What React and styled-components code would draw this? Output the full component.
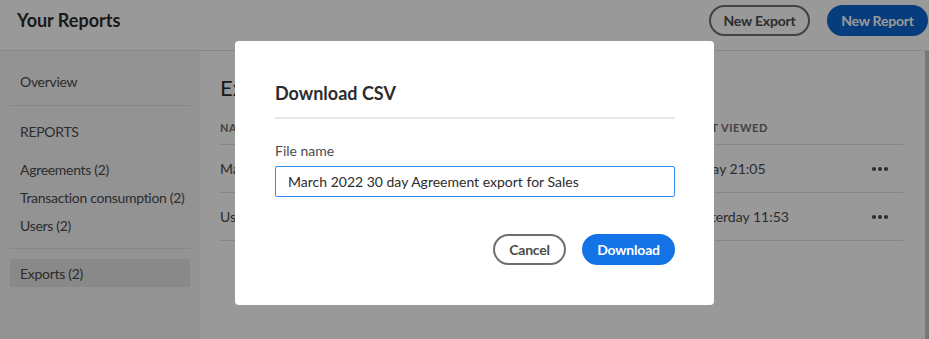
import React from 'react';
import styled, { createGlobalStyle } from 'styled-components';

const GlobalStyle = createGlobalStyle`
  html, body {
    margin: 0;
    padding: 0;
    width: 929px;
    height: 339px;
    overflow: hidden;
    font-family: Lato, "Open Sans", sans-serif;
    color: #2c2c2c;
    background: #fff;
  }
  * { box-sizing: border-box; }
`;

const Page = styled.div`
  position: relative;
  width: 929px;
  height: 339px;
  display: flex;
  flex-direction: column;
`;

const Header = styled.header`
  height: 51px;
  flex: none;
  display: flex;
  justify-content: space-between;
  align-items: flex-start;
  padding: 5px 0 0 17px;
  border-bottom: 1px solid #e1e1e1;
`;

const PageTitle = styled.h1`
  margin: 0;
  font-size: 18px;
  font-weight: 700;
  line-height: 31px;
  color: #2c2c2c;
`;

const HeaderActions = styled.div`
  display: flex;
  gap: 17px;
  margin-right: 1px;
`;

const PillButton = styled.button`
  height: 31px;
  width: ${(p) => p.$w}px;
  padding: 0;
  border-radius: 16px;
  font-family: Lato, sans-serif;
  font-size: 14px;
  font-weight: 700;
  letter-spacing: -0.2px;
  cursor: pointer;
  border: 2px solid ${(p) => (p.$primary ? p.$primary : '#6e6e6e')};
  background: ${(p) => (p.$primary ? p.$primary : '#fff')};
  color: ${(p) => (p.$primary ? '#fff' : '#4b4b4b')};
`;

const Body = styled.div`
  flex: 1;
  display: flex;
  min-height: 0;
`;

const Sidebar = styled.nav`
  width: 200px;
  flex: none;
  background: #f5f5f5;
  padding: 16px 10px 0;
`;

const NavItem = styled.div`
  height: 28px;
  display: flex;
  align-items: center;
  padding: 0 10px;
  font-size: 14px;
  letter-spacing: -0.3px;
  white-space: nowrap;
  color: #4b4b4b;
  background: ${(p) => (p.$active ? '#e4e4e4' : 'transparent')};
`;

const NavHeading = styled(NavItem)`
  margin: 11px 0 10px;
  text-transform: uppercase;
`;

const NavDivider = styled.hr`
  margin: ${(p) => p.$top}px 0 10px;
  border: none;
  border-top: 1px solid #e1e1e1;
`;

const Main = styled.main`
  flex: 1;
  padding: 22px 22px 0 20px;
  border-right: 4px solid #c6c6c6;
`;

const SectionTitle = styled.h2`
  margin: 0 0 12px;
  font-size: 22px;
  font-weight: 400;
  line-height: 30px;
  color: #2c2c2c;
`;

const Table = styled.div`
  display: flex;
  flex-direction: column;
`;

const Row = styled.div`
  height: ${(p) => (p.$head ? 30 : 48)}px;
  padding-bottom: ${(p) => (p.$head ? 4 : 0)}px;
  display: grid;
  grid-template-columns: 250px 220px 1fr 50px;
  align-items: center;
  border-bottom: 1px solid #e1e1e1;
  font-size: 14px;
  color: #4b4b4b;
`;

const HeadCell = styled.div`
  font-size: 11px;
  font-weight: 700;
  letter-spacing: 0.6px;
  color: #6e6e6e;
  text-transform: uppercase;
`;

const Cell = styled.div`
  white-space: nowrap;
  overflow: hidden;
`;

const MoreButton = styled.div`
  display: flex;
  gap: 2px;
  justify-content: center;
  padding-left: 4px;
`;

const Dot = styled.span`
  width: 4px;
  height: 4px;
  border-radius: 50%;
  background: #4b4b4b;
`;

const Overlay = styled.div`
  position: absolute;
  inset: 0;
  background: rgba(0, 0, 0, 0.4);
  display: flex;
  justify-content: center;
  align-items: center;
  padding: 6px 0 0 20px;
`;

const Dialog = styled.div`
  width: 479px;
  background: #fff;
  border-radius: 4px;
  padding: 40px 39px 40px 40px;
  display: flex;
  flex-direction: column;
`;

const DialogTitle = styled.h3`
  margin: 0;
  font-size: 18px;
  font-weight: 700;
  line-height: 24px;
  color: #2c2c2c;
`;

const DialogDivider = styled.hr`
  margin: 12px 0 22px;
  border: none;
  border-top: 2px solid #e8e8e8;
`;

const Label = styled.label`
  font-size: 14px;
  line-height: 20px;
  color: #4b4b4b;
`;

const TextInput = styled.input`
  margin-top: 5px;
  height: 31px;
  width: 100%;
  padding: 0 12px;
  border: 1px solid #378ef0;
  border-radius: 2px;
  font-family: Lato, sans-serif;
  font-size: 14px;
  color: #2c2c2c;
  outline: none;
`;

const DialogActions = styled.div`
  margin-top: 37px;
  display: flex;
  justify-content: flex-end;
  gap: 16px;
`;

const rows = [
  { name: 'March 2022 30 day Agreement', created: '1 Mar 2022', viewed: 'Today 21:05' },
  { name: 'Users export Q1', created: '28 Feb 2022', viewed: 'Yesterday 11:53' },
];

export default function App() {
  return (
    <>
      <GlobalStyle />
      <Page>
        <Header>
          <PageTitle>Your Reports</PageTitle>
          <HeaderActions>
            <PillButton $w={101}>New Export</PillButton>
            <PillButton $primary="#0d66d0" $w={101}>New Report</PillButton>
          </HeaderActions>
        </Header>
        <Body>
          <Sidebar>
            <NavItem>Overview</NavItem>
            <NavDivider $top={10} />
            <NavHeading as="div">Reports</NavHeading>
            <NavItem>Agreements (2)</NavItem>
            <NavItem>Transaction consumption (2)</NavItem>
            <NavItem>Users (2)</NavItem>
            <NavDivider $top={9} />
            <NavItem $active>Exports (2)</NavItem>
          </Sidebar>
          <Main>
            <SectionTitle>Exports</SectionTitle>
            <Table>
              <Row $head>
                <HeadCell>Name</HeadCell>
                <HeadCell>Created</HeadCell>
                <HeadCell>Last viewed</HeadCell>
                <div />
              </Row>
              {rows.map((r) => (
                <Row key={r.name}>
                  <Cell>{r.name}</Cell>
                  <Cell>{r.created}</Cell>
                  <Cell>{r.viewed}</Cell>
                  <MoreButton>
                    <Dot />
                    <Dot />
                    <Dot />
                  </MoreButton>
                </Row>
              ))}
            </Table>
          </Main>
        </Body>
        <Overlay>
          <Dialog>
            <DialogTitle>Download CSV</DialogTitle>
            <DialogDivider />
            <Label htmlFor="file-name">File name</Label>
            <TextInput
              id="file-name"
              defaultValue="March 2022 30 day Agreement export for Sales"
            />
            <DialogActions>
              <PillButton $w={73}>Cancel</PillButton>
              <PillButton $primary="#1473e6" $w={93}>Download</PillButton>
            </DialogActions>
          </Dialog>
        </Overlay>
      </Page>
    </>
  );
}
